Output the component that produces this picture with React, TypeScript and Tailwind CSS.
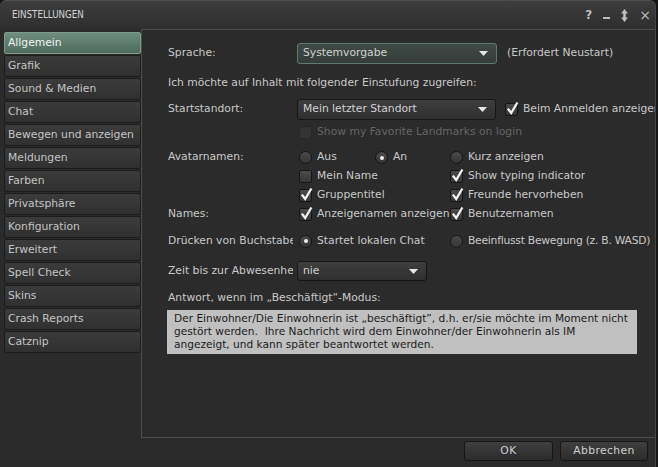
import React from "react";

const Check = ({ checked, disabled }: { checked?: boolean; disabled?: boolean }) => (
  <div
    className={`relative w-[13px] h-[13px] shrink-0 rounded-[2px] border ${
      disabled ? "border-[#262626] bg-[#333333]" : "border-[#151515] bg-gradient-to-b from-[#4a4a4a] to-[#363636]"
    }`}
  >
    {checked && (
      <svg className="absolute left-[0px] top-[-3px]" width="13" height="15" viewBox="0 0 13 15">
        <path d="M2.5 8.5 L5.2 12 L10.8 2.5" fill="none" stroke="#f2f2f2" strokeWidth="2.3" strokeLinecap="square" />
      </svg>
    )}
  </div>
);

const Radio = ({ on }: { on?: boolean }) => (
  <div className="relative w-[13px] h-[13px] shrink-0 rounded-full border border-[#151515] bg-gradient-to-b from-[#4a4a4a] to-[#353535] flex items-center justify-center">
    {on && <div className="w-[4px] h-[4px] rounded-full bg-[#f0f0f0]" />}
  </div>
);

const Arrow = () => (
  <svg width="9" height="5" viewBox="0 0 9 5" className="shrink-0">
    <path d="M0 0 L9 0 L4.5 5 Z" fill="#e6e6e6" />
  </svg>
);

const Dropdown = ({ text, w, green }: { text: string; w: string; green?: boolean }) => (
  <div
    className={`${w} h-full shrink-0 flex items-center justify-between pl-[5px] pr-[8px] rounded-[3px] border ${
      green
        ? "border-[#5d7a6c] bg-gradient-to-b from-[#3f4a45] to-[#343c39]"
        : "border-[#161616] bg-gradient-to-b from-[#3e3e3e] to-[#2f2f2f]"
    } text-[#d2d2d2]`}
  >
    <span className="whitespace-nowrap">{text}</span>
    <Arrow />
  </div>
);

const Label = ({ children }: { children: React.ReactNode }) => (
  <div className="w-[129px] shrink-0 pr-[4px]">
    <div className="overflow-hidden whitespace-nowrap">{children}</div>
  </div>
);

const Opt = ({
  kind,
  on,
  text,
  w,
  disabled,
  tight,
}: {
  kind: "c" | "r";
  on?: boolean;
  text: string;
  w?: string;
  disabled?: boolean;
  tight?: boolean;
}) => (
  <div className={`${w ?? ""} flex items-center gap-[5px] overflow-hidden whitespace-nowrap shrink-0`}>
    {kind === "c" ? <Check checked={on} disabled={disabled} /> : <Radio on={on} />}
    <span className={`${disabled ? "text-[#666666]" : ""} ${tight ? "tracking-[-0.25px]" : ""}`}>{text}</span>
  </div>
);

const tabs = [
  "Allgemein",
  "Grafik",
  "Sound & Medien",
  "Chat",
  "Bewegen und anzeigen",
  "Meldungen",
  "Farben",
  "Privatsphäre",
  "Konfiguration",
  "Erweitert",
  "Spell Check",
  "Skins",
  "Crash Reports",
  "Catznip",
];

export default function App() {
  return (
    <div className="w-[658px] h-[467px] overflow-hidden bg-[#141414] font-['DejaVu_Sans',sans-serif] text-[10.75px] text-[#c9c9c9]">
      <div className="w-[656px] h-[467px] flex flex-col rounded-t-[6px] bg-[#2b2b2b] border-r border-[#444444]">
        {/* Title bar */}
        <div className="h-[29px] shrink-0 flex items-center justify-between pl-[12px] pr-[4px] rounded-t-[6px] bg-gradient-to-b from-[#3d3d3d] to-[#2e2e2e] border-t border-[#505050]">
          <span className="origin-left scale-x-[0.88] font-['DejaVu_Sans_Condensed','DejaVu_Sans',sans-serif] text-[11px] text-[#d4d4d4]">
            EINSTELLUNGEN
          </span>
          <div className="flex items-center gap-[11px] text-[#bdbdbd]">
            <span className="font-bold text-[12px] leading-none">?</span>
            <div className="w-[7px] h-[2.5px] bg-[#bdbdbd] mt-[6px]" />
            <svg width="7" height="13" viewBox="0 0 7 13">
              <path d="M3.5 0 L7 4.5 L4.8 4.5 L4.8 8.5 L7 8.5 L3.5 13 L0 8.5 L2.2 8.5 L2.2 4.5 L0 4.5 Z" fill="#bdbdbd" />
            </svg>
            <span className="text-[14px] leading-none">×</span>
          </div>
        </div>

        <div className="flex flex-1 min-h-0">
          {/* Sidebar */}
          <div className="w-[141px] shrink-0 pl-[4px] pt-[3px] flex flex-col gap-[1px]">
            {tabs.map((t, i) => (
              <div
                key={t}
                className={`h-[22px] flex items-center pl-[3px] rounded-[2px] border text-[10.75px] whitespace-nowrap overflow-hidden ${
                  i === 0
                    ? "border-[#7d9a8c] bg-gradient-to-b from-[#6d8d7e] to-[#4f6c5f] text-[#f2f2f2]"
                    : "border-[#1c1c1c] bg-gradient-to-b from-[#3b3b3b] to-[#303030] text-[#c4c4c4]"
                }`}
              >
                {t}
              </div>
            ))}
          </div>

          {/* Right side */}
          <div className="flex-1 flex flex-col min-w-0">
            <div className="h-[409px] shrink-0 border-t border-l border-b border-[#4d4d4d] pl-[26px] pt-[13px] flex flex-col overflow-hidden">
              <div className="h-[21px] flex items-center shrink-0">
                <Label>Sprache:</Label>
                <Dropdown text="Systemvorgabe" w="w-[200px]" green />
                <span className="ml-[10px] whitespace-nowrap">(Erfordert Neustart)</span>
              </div>
              <div className="h-[18px] mt-[10px] flex items-center shrink-0 whitespace-nowrap">
                Ich möchte auf Inhalt mit folgender Einstufung zugreifen:
              </div>
              <div className="h-[21px] mt-[7px] flex items-center shrink-0">
                <Label>Startstandort:</Label>
                <Dropdown text="Mein letzter Standort" w="w-[199px]" />
                <div className="ml-[9px]">
                  <Opt kind="c" on text="Beim Anmelden anzeigen" />
                </div>
              </div>
              <div className="h-[16px] mt-[4px] flex items-center shrink-0">
                <Label>{""}</Label>
                <div className="pl-[2px]">
                  <Opt kind="c" disabled text="Show my Favorite Landmarks on login" />
                </div>
              </div>
              <div className="h-[19px] mt-[8px] flex items-center shrink-0">
                <Label>Avatarnamen:</Label>
                <div className="pl-[2px] flex">
                  <Opt kind="r" text="Aus" w="w-[76px]" />
                  <Opt kind="r" on text="An" w="w-[75px]" />
                  <Opt kind="r" text="Kurz anzeigen" />
                </div>
              </div>
              <div className="h-[19px] flex items-center shrink-0">
                <Label>{""}</Label>
                <div className="pl-[2px] flex">
                  <Opt kind="c" text="Mein Name" w="w-[151px]" />
                  <Opt kind="c" on text="Show typing indicator" />
                </div>
              </div>
              <div className="h-[19px] flex items-center shrink-0">
                <Label>{""}</Label>
                <div className="pl-[2px] flex">
                  <Opt kind="c" on text="Gruppentitel" w="w-[151px]" />
                  <Opt kind="c" on text="Freunde hervorheben" />
                </div>
              </div>
              <div className="h-[19px] flex items-center shrink-0">
                <Label>Names:</Label>
                <div className="pl-[2px] flex">
                  <Opt kind="c" on text="Anzeigenamen anzeigen" w="w-[151px]" />
                  <Opt kind="c" on text="Benutzernamen" />
                </div>
              </div>
              <div className="h-[18px] mt-[8px] flex items-center shrink-0">
                <Label>Drücken von Buchstaben:</Label>
                <div className="pl-[2px] flex">
                  <Opt kind="r" on text="Startet lokalen Chat" w="w-[151px]" />
                  <Opt kind="r" tight text="Beeinflusst Bewegung (z. B. WASD)" />
                </div>
              </div>
              <div className="h-[20px] mt-[11px] flex items-center shrink-0">
                <Label>Zeit bis zur Abwesenheit:</Label>
                <Dropdown text="nie" w="w-[130px]" />
              </div>
              <div className="h-[18px] mt-[8px] flex items-center shrink-0 whitespace-nowrap">
                Antwort, wenn im „Beschäftigt“-Modus:
              </div>
              <div className="w-[470px] h-[44px] mt-[3px] -ml-[1px] shrink-0 bg-[#c0c0c0] text-[#1c1c1c] text-[10.6px] pl-[7px] pt-[2px] leading-[13px] whitespace-pre overflow-hidden">
                {"Der Einwohner/Die Einwohnerin ist „beschäftigt”, d.h. er/sie möchte im Moment nicht\ngestört werden.  Ihre Nachricht wird dem Einwohner/der Einwohnerin als IM\nangezeigt, und kann später beantwortet werden."}
              </div>
            </div>

            {/* Footer */}
            <div className="flex-1 flex justify-end gap-[7px] pt-[3px] pr-[7px]">
              <div className="w-[89px] h-[20px] flex items-center justify-center rounded-[3px] border border-[#161616] bg-gradient-to-b from-[#3f3f3f] to-[#2c2c2c] text-[#cfcfcf] tracking-[0.4px]">
                OK
              </div>
              <div className="w-[88px] h-[20px] flex items-center justify-center rounded-[3px] border border-[#161616] bg-gradient-to-b from-[#3f3f3f] to-[#2c2c2c] text-[#cfcfcf] tracking-[0.4px]">
                Abbrechen
              </div>
            </div>
          </div>
        </div>
      </div>
    </div>
  );
}
